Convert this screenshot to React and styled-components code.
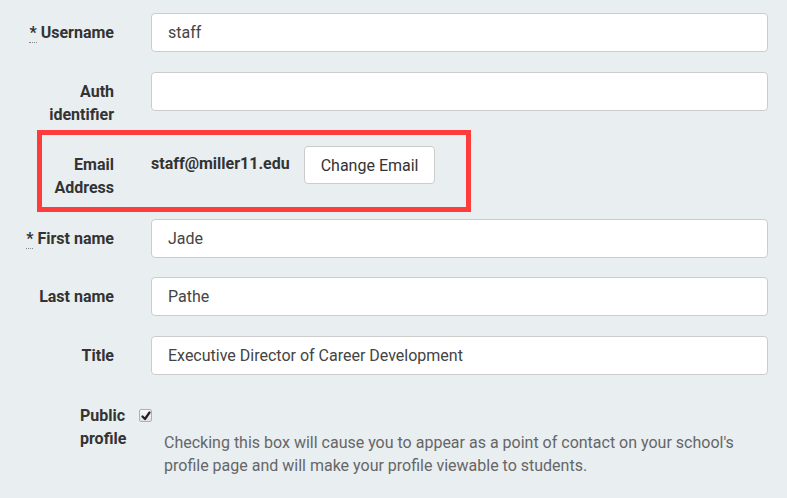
import React from 'react';
import styled, { createGlobalStyle } from 'styled-components';

const GlobalStyle = createGlobalStyle`
  html, body {
    margin: 0;
    padding: 0;
    background: #e9eef1;
  }
  body {
    font-family: Roboto, "Noto Sans", Arial, sans-serif;
    color: #333;
  }
`;

const Form = styled.form`
  width: 787px;
  height: 498px;
  box-sizing: border-box;
  padding: 13px 19px 0 24px;
  overflow: hidden;
`;

const Row = styled.div`
  position: relative;
  display: flex;
  align-items: flex-start;
  margin-bottom: 19.5px;

  ${props => props.highlight && `
    &::before {
      content: '';
      position: absolute;
      top: -15px;
      left: 13px;
      width: 434px;
      height: 82px;
      border: 5px solid #fd3c3c;
      box-sizing: border-box;
      pointer-events: none;
    }
  `}
`;

const Label = styled.label`
  flex: 0 0 90px;
  min-width: 0;
  box-sizing: border-box;
  padding-top: ${props => props.checkbox ? '10px' : '8px'};
  padding-left: ${props => props.checkbox ? '56px' : '0'};
  text-align: ${props => props.checkbox ? 'left' : 'right'};
  font-size: 16px;
  font-weight: 700;
  line-height: 23px;
  color: #333;
`;

const Required = styled.abbr`
  text-decoration: none;
  border-bottom: 1px dotted #888;
  margin-right: 4px;
`;

const Control = styled.div`
  flex: 1;
  margin-left: 37px;
  display: flex;
  flex-direction: ${props => props.stacked ? 'column' : 'row'};
  align-items: ${props => props.stacked ? 'flex-start' : 'center'};
  min-height: ${props => props.inline ? '38px' : 'auto'};
  margin-top: ${props => props.inline ? '1px' : '0'};
`;

const Input = styled.input`
  width: 100%;
  height: 39px;
  box-sizing: border-box;
  padding: 0 16px;
  border: 1px solid #cccccc;
  border-radius: 4px;
  background: #fff;
  font-family: Roboto, "Noto Sans", Arial, sans-serif;
  font-size: 16px;
  color: #444;
  outline: none;
`;

const StaticValue = styled.span`
  font-size: 16px;
  font-weight: 700;
  color: #333;
  margin-right: 14px;
  margin-top: -3px;
`;

const Button = styled.button`
  height: 38px;
  padding: 0 16px;
  border: 1px solid #cccccc;
  border-radius: 4px;
  background: #fff;
  font-family: Roboto, "Noto Sans", Arial, sans-serif;
  font-size: 16px;
  color: #333;
  cursor: pointer;
`;

const CheckBox = styled.span`
  display: inline-flex;
  align-items: center;
  justify-content: center;
  width: 13px;
  height: 13px;
  box-sizing: border-box;
  margin: 15px 0 0 -12px;
  border: 1px solid #b0b0b0;
  border-radius: 2px;
  background: linear-gradient(#fafafa, #e2e2e2);
`;

const HiddenInput = styled.input`
  display: none;
`;

const HelpText = styled.p`
  margin: 9px 0 0 13px;
  font-size: 16px;
  line-height: 23px;
  color: #666;
`;

const fields = [
  { label: 'Username', required: true, value: 'staff' },
  { label: 'Auth identifier', value: '' },
];

const moreFields = [
  { label: 'First name', required: true, value: 'Jade' },
  { label: 'Last name', value: 'Pathe' },
  { label: 'Title', value: 'Executive Director of Career Development' },
];

const TextRow = ({ label, required, value }) => (
  <Row>
    <Label>
      {required && <Required title="required">*</Required>}
      {label}
    </Label>
    <Control>
      <Input type="text" defaultValue={value} />
    </Control>
  </Row>
);

export default function App() {
  return (
    <>
      <GlobalStyle />
      <Form>
        {fields.map(f => <TextRow key={f.label} {...f} />)}
        <Row highlight>
          <Label>Email Address</Label>
          <Control inline>
            <StaticValue>staff@miller11.edu</StaticValue>
            <Button type="button">Change Email</Button>
          </Control>
        </Row>
        {moreFields.map(f => <TextRow key={f.label} {...f} />)}
        <Row>
          <Label checkbox>Public profile</Label>
          <Control stacked>
            <CheckBox>
              <HiddenInput type="checkbox" defaultChecked />
              <svg width="10" height="10" viewBox="0 0 10 10">
                <path d="M1.5 5.5 L4 8 L8.5 1.5" fill="none" stroke="#222" strokeWidth="2.2" strokeLinecap="round" strokeLinejoin="round" />
              </svg>
            </CheckBox>
            <HelpText>
              Checking this box will cause you to appear as a point of contact on your school's profile page and will make your profile viewable to students.
            </HelpText>
          </Control>
        </Row>
      </Form>
    </>
  );
}
